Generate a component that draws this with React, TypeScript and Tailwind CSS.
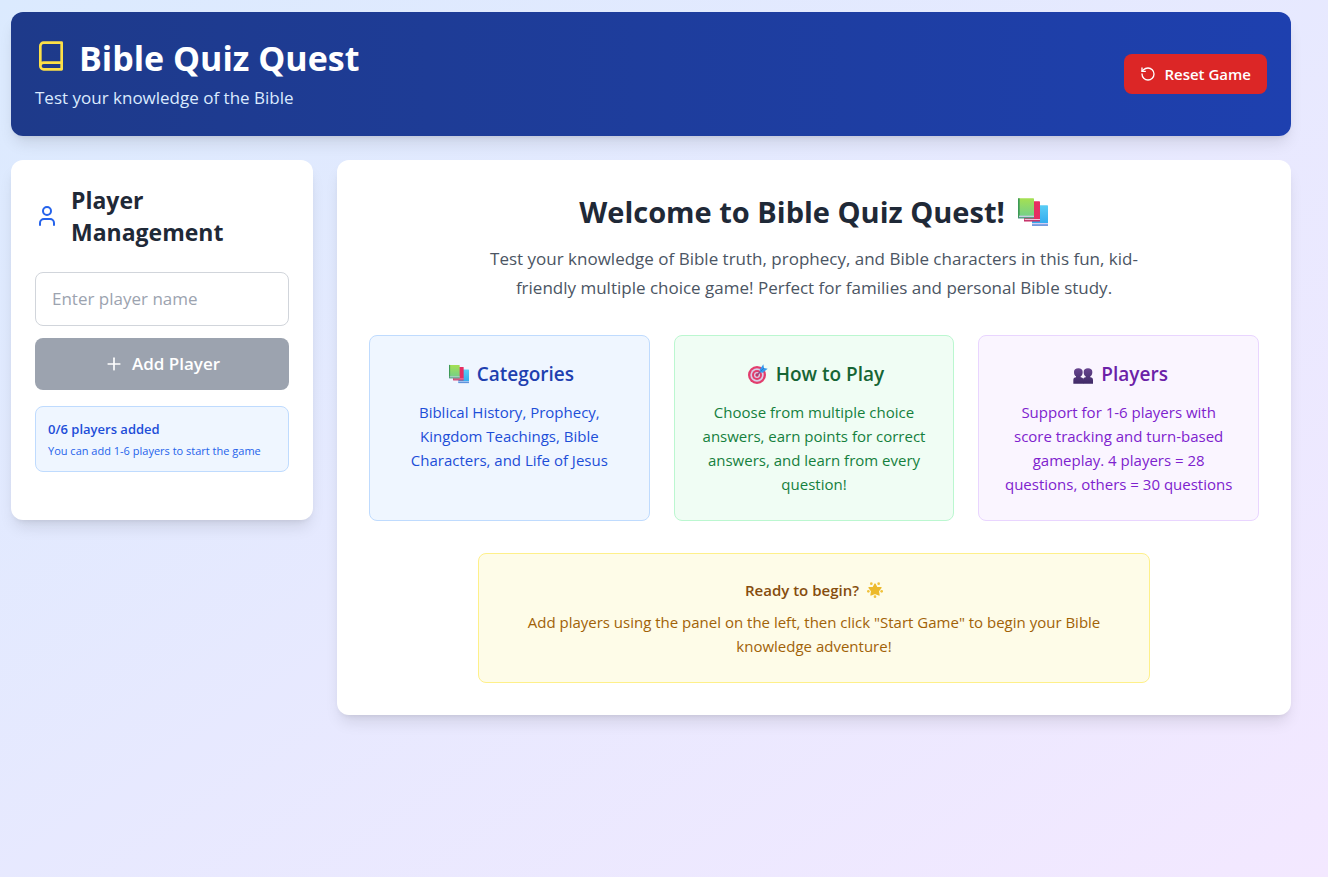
import React, { useState } from 'react';
import { Plus, RotateCcw, User } from 'lucide-react';

interface IIcon {
  className: string,
}

const BookIcon: React.FC <IIcon> = ({ className }) => (
  <svg
    className={className}
    viewBox="0 0 24 24"
    fill="none"
    stroke="currentColor"
    strokeWidth="2"
    strokeLinecap="round"
    strokeLinejoin="round"
    aria-hidden="true"
  >
    <path d="M4 19.5v-15A2.5 2.5 0 0 1 6.5 2H20v20H6.5a2.5 2.5 0 0 1 0-5H20" />
  </svg>
);

const BooksIcon: React.FC <IIcon> = ({ className }) => (
  <svg className={className} viewBox="0 0 90 84" aria-hidden="true">
    <defs>
      <linearGradient id="bookGreen" x1="0" y1="0" x2="0" y2="1">
        <stop offset="0" stopColor="#a5e052" />
        <stop offset="1" stopColor="#6fce8e" />
      </linearGradient>
      <linearGradient id="bookBlue" x1="0" y1="0" x2="0" y2="1">
        <stop offset="0" stopColor="#5acdf5" />
        <stop offset="1" stopColor="#2fa8ee" />
      </linearGradient>
    </defs>
    <rect x="42" y="22" width="48" height="60" rx="2" fill="url(#bookBlue)" />
    <rect x="42" y="75" width="48" height="5" fill="#d5cdf2" />
    <rect x="42" y="80" width="48" height="3" fill="#4a73cf" />
    <rect x="18" y="10" width="48" height="60" rx="2" fill="#e62e62" />
    <rect x="20" y="63" width="46" height="4" fill="#f0c4dc" />
    <rect x="18" y="67" width="48" height="3" fill="#b52560" />
    <rect x="0" y="1" width="48" height="60" rx="2" fill="url(#bookGreen)" />
    <rect x="0" y="1" width="5" height="58" fill="#3d9a56" />
    <rect x="3" y="53" width="45" height="5" fill="#c6cfe0" />
    <rect x="0" y="58" width="48" height="3" fill="#43857b" />
  </svg>
);

const TargetIcon: React.FC <IIcon> = ({ className }) => (
  <svg className={className} viewBox="0 0 60 60" aria-hidden="true">
    <circle cx="27" cy="33" r="27" fill="#e23d6d" />
    <circle cx="27" cy="33" r="20" fill="#d9cfe6" />
    <circle cx="27" cy="33" r="15" fill="#e23d6d" />
    <circle cx="27" cy="33" r="9" fill="#d9cfe6" />
    <circle cx="27" cy="33" r="5" fill="#d32f5e" />
    <path d="M28 32 44 16" stroke="#8c4a86" strokeWidth="4" strokeLinecap="round" />
    <path d="M35 17 46 1 48 12 59 14 44 26 36 25Z" fill="#3598ec" />
    <path d="M38 22 48 12" stroke="#1d6fc4" strokeWidth="2" />
  </svg>
);

const PeopleIcon: React.FC <IIcon> = ({ className }) => (
  <svg className={className} viewBox="0 0 60 60" aria-hidden="true">
    <defs>
      <linearGradient id="people" x1="0" y1="0" x2="0" y2="1">
        <stop offset="0" stopColor="#67458f" />
        <stop offset="1" stopColor="#3f2a66" />
      </linearGradient>
    </defs>
    <path
      d="M16 13c8 0 13 4 13 11 0 7-2 11-6 13v3c5 1 8 3 8 8v11H1V48c0-5 3-7 8-8v-3c-4-2-6-6-6-13 0-7 5-11 13-11Z"
      fill="url(#people)"
    />
    <path
      d="M45 13c8 0 13 4 13 11 0 7-2 11-6 13v3c5 1 8 3 8 8v11H30V48c0-5 3-7 8-8v-3c-4-2-6-6-6-13 0-7 5-11 13-11Z"
      fill="url(#people)"
    />
  </svg>
);

const StarIcon: React.FC <IIcon> = ({ className }) => (
  <svg className={className} viewBox="0 0 48 48" aria-hidden="true">
    <path
      d="M24 6 29 16 42 17 34 27 36 39 24 34 12 39 14 27 6 17 19 16Z"
      fill="#ecb92b"
      stroke="#ecb92b"
      strokeWidth="4"
      strokeLinejoin="round"
    />
    <g fill="#f0c23c">
      <circle cx="13" cy="5" r="4" />
      <circle cx="35" cy="5" r="4" />
      <circle cx="4" cy="28" r="4" />
      <circle cx="44" cy="28" r="4" />
      <circle cx="24" cy="44" r="4" />
    </g>
  </svg>
);

const cards = [
  {
    title: 'Categories',
    text: 'Biblical History, Prophecy, Kingdom Teachings, Bible Characters, and Life of Jesus',
    Icon: BooksIcon,
    box: 'border-[#bfdbfe] bg-[#eff6ff]',
    heading: 'text-[#1e40af]',
    body: 'text-[#1d4ed8]',
  },
  {
    title: 'How to Play',
    text: 'Choose from multiple choice answers, earn points for correct answers, and learn from every question!',
    Icon: TargetIcon,
    box: 'border-[#bbf7d0] bg-[#f0fdf4]',
    heading: 'text-[#166534]',
    body: 'text-[#15803d]',
  },
  {
    title: 'Players',
    text: 'Support for 1-6 players with score tracking and turn-based gameplay. 4 players = 28 questions, others = 30 questions',
    Icon: PeopleIcon,
    box: 'border-[#e9d5ff] bg-[#faf5ff]',
    heading: 'text-[#6b21a8]',
    body: 'text-[#7e22ce]',
  },
];

const Header: React.FC = () => (
  <header className="flex items-center justify-between rounded-xl bg-linear-to-r/srgb from-[#1e3a8a] to-[#1e40af] p-6 text-white shadow-lg">
    <div>
      <h1 className="mb-1 flex items-start gap-3 text-[34px] leading-11 font-bold">
        <BookIcon className="mt-1 size-8 text-[#fde047]" />
        Bible Quiz Quest
      </h1>
      <p className="text-[17px] leading-7 text-[#dbeafe]">Test your knowledge of the Bible</p>
    </div>
    <button className="flex items-center gap-2 rounded-lg bg-[#dc2626] px-4 py-2 text-[15px] leading-6 font-semibold">
      <RotateCcw className="size-4" />
      Reset Game
    </button>
  </header>
);

const PlayerPanel: React.FC = () => {
  const [name, setName] = useState('');

  return (
    <section className="rounded-xl bg-white p-6 shadow-lg">
      <h2 className="mb-6 flex items-center gap-3 text-[23px] leading-8 font-bold text-[#1f2937]">
        <User className="size-6 shrink-0 text-[#2563eb]" />
        Player Management
      </h2>
      <input
        type="text"
        aria-label="Player name"
        placeholder="Enter player name"
        value={name}
        onChange={(event) => setName(event.target.value)}
        className="w-full rounded-lg border border-[#d1d5db] px-4 py-3 text-[17px] leading-7 placeholder:text-[#9ca3af]"
      />
      <button
        disabled={!name}
        className="mt-3 flex w-full items-center justify-center gap-2 rounded-lg bg-[#2563eb] px-4 py-3 text-[17px] leading-7 font-semibold text-white disabled:bg-[#9ca3af]"
      >
        <Plus className="size-5" />
        Add Player
      </button>
      <div className="mt-4 mb-6 rounded-lg border border-[#bfdbfe] bg-[#eff6ff] p-3">
        <p className="text-[13px] leading-5 font-semibold text-[#1d4ed8]">0/6 players added</p>
        <p className="mt-1 text-[11px] leading-4 text-[#2563eb]">You can add 1-6 players to start the game</p>
      </div>
    </section>
  );
}

const Welcome: React.FC = () => (
  <main className="col-span-3 rounded-xl bg-white p-8 text-center shadow-lg">
    <h2 className="mb-3 flex items-center justify-center gap-3 text-[29px] leading-10 font-bold text-[#1f2937]">
      Welcome to Bible Quiz Quest!
      <BooksIcon className="h-7 w-8" />
    </h2>
    <p className="mx-auto mb-[33px] max-w-2xl text-[17px] leading-[29px] text-[#4b5563]">
      Test your knowledge of Bible truth, prophecy, and Bible characters in this fun, kid-friendly
      multiple choice game! Perfect for families and personal Bible study.
    </p>
    <div className="mb-8 grid grid-cols-3 gap-6">
      {cards.map(({ title, text, Icon, box, heading, body }) => (
        <div key={title} className={`rounded-lg border p-6 ${box}`}>
          <h3 className={`mb-3 flex items-center justify-center gap-2 pl-1 text-[19px] leading-7 font-semibold ${heading}`}>
            <Icon className="size-5" />
            {title}
          </h3>
          <p className={`text-[15px] leading-6 ${body}`}>{text}</p>
        </div>
      ))}
    </div>
    <div className="mx-auto max-w-2xl rounded-lg border border-[#fef08a] bg-[#fefce8] p-6 text-[15px] leading-6">
      <p className="mb-2 flex items-center justify-center gap-2 font-semibold text-[#854d0e]">
        Ready to begin?
        <StarIcon className="size-4" />
      </p>
      <p className="text-[#a16207]">
        Add players using the panel on the left, then click "Start Game" to begin your Bible knowledge adventure!
      </p>
    </div>
  </main>
);

const App: React.FC = () => {
  return (
    <div className="min-h-screen bg-linear-to-br/srgb from-[#dbeafe] to-[#f3e8ff] pt-3 pr-[37px] pb-6 pl-[11px] font-['Segoe_UI','Open_Sans','Noto_Sans',sans-serif]">
      <Header />
      <div className="mt-6 grid grid-cols-4 items-start gap-6">
        <PlayerPanel />
        <Welcome />
      </div>
    </div>
  );
}

export default App;
